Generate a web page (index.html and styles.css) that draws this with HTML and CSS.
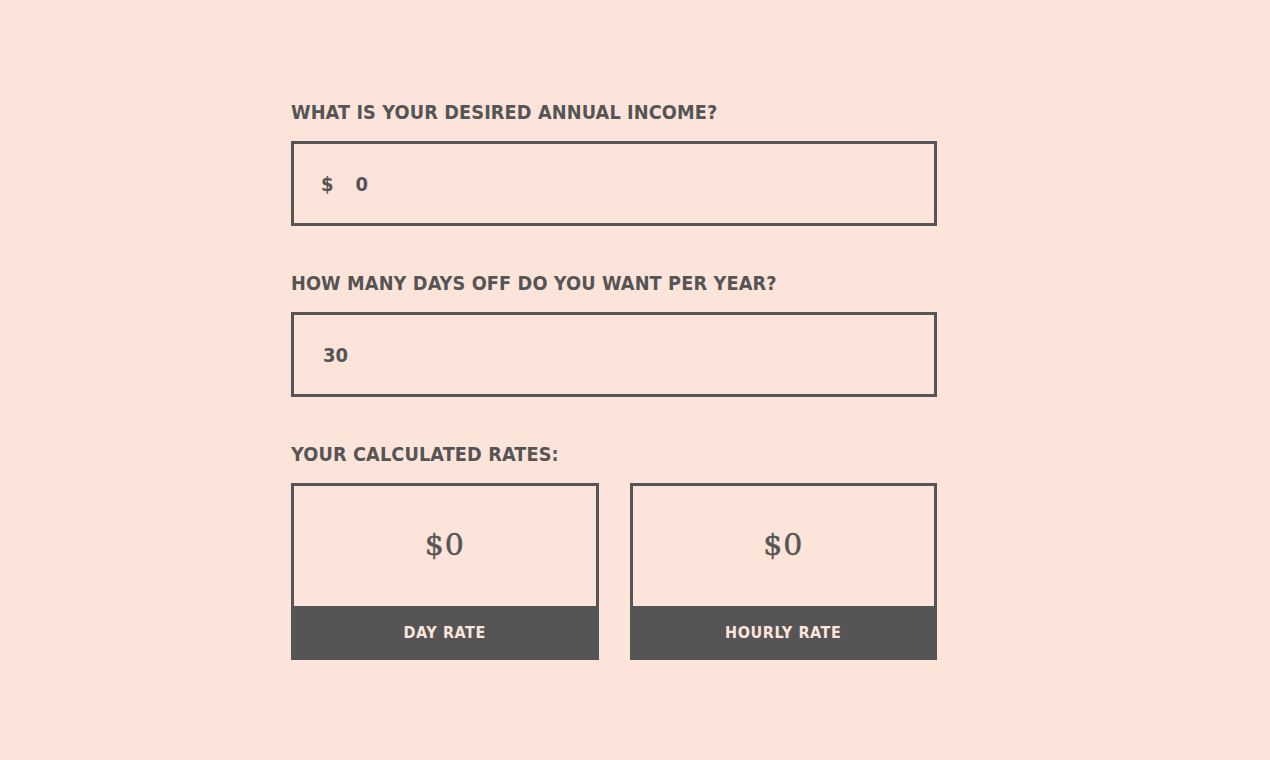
FILE: index.html
```html
<!DOCTYPE html>
<html lang="en">
<head>
<meta charset="utf-8">
<title>Rate calculator</title>
<link rel="stylesheet" href="styles.css">
</head>
<body>
<main class="calc">
  <section class="field">
    <label class="label" for="income">WHAT IS YOUR DESIRED ANNUAL INCOME?</label>
    <div class="box">
      <span class="prefix">$</span>
      <input id="income" class="input" type="text" value="0">
    </div>
  </section>
  <section class="field">
    <label class="label" for="days">HOW MANY DAYS OFF DO YOU WANT PER YEAR?</label>
    <div class="box box-plain">
      <input id="days" class="input" type="text" value="30">
    </div>
  </section>
  <section class="field">
    <div class="label">YOUR CALCULATED RATES:</div>
    <div class="rates">
      <div class="card">
        <div class="amount">$0</div>
        <div class="caption">DAY RATE</div>
      </div>
      <div class="card">
        <div class="amount">$0</div>
        <div class="caption">HOURLY RATE</div>
      </div>
    </div>
  </section>
</main>
</body>
</html>
```
FILE: styles.css
```css
html, body {
  margin: 0;
  padding: 0;
  background: #fde4da;
}
body {
  font-family: "DejaVu Sans Condensed", "DejaVu Sans", sans-serif;
  color: #555555;
}
.calc {
  width: 646px;
  margin-left: 291px;
  padding-top: 101px;
  display: flex;
  flex-direction: column;
  gap: 46px;
}
.field {
  display: flex;
  flex-direction: column;
}
.label {
  display: block;
  font-weight: bold;
  font-size: 19.7px;
  line-height: 24px;
  letter-spacing: 0.12px;
  margin-bottom: 16px;
}
.box {
  box-sizing: border-box;
  height: 85px;
  border: 3px solid #555555;
  display: flex;
  align-items: center;
  padding-left: 27px;
  font-weight: bold;
  font-size: 20px;
}
.box-plain {
  padding-left: 29px;
}
.prefix {
  margin-right: 22px;
}
.input {
  border: 0;
  background: transparent;
  font: inherit;
  color: inherit;
  padding: 0;
  outline: none;
  width: 200px;
}
.rates {
  display: flex;
  gap: 31px;
}
.card {
  flex: 1;
  height: 177px;
  box-sizing: border-box;
  border: 3px solid #555555;
  display: flex;
  flex-direction: column;
}
.amount {
  flex: 1;
  display: flex;
  align-items: center;
  justify-content: center;
  font-family: "DejaVu Serif", serif;
  font-size: 30px;
  letter-spacing: 1px;
  padding-bottom: 4px;
  -webkit-text-stroke: 0.5px #555555;
}
.caption {
  height: 49px;
  background: #555555;
  color: #fde4da;
  font-weight: bold;
  font-size: 16px;
  letter-spacing: 0.6px;
  display: flex;
  align-items: center;
  justify-content: center;
  padding-top: 2px;
}
```
